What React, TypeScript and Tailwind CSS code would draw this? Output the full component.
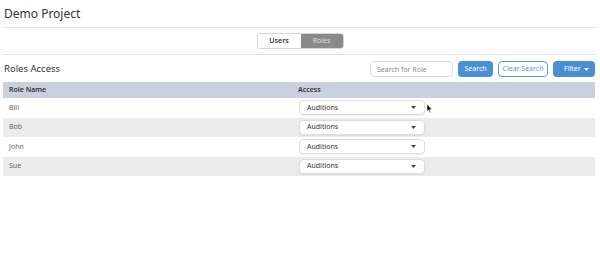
import { useState } from "react";

const rows = ["Bill", "Bob", "John", "Sue"];

function Caret() {
  return (
    <svg width="5" height="3" viewBox="0 0 5 3" className="shrink-0">
      <path d="M0 0h5L2.5 3z" fill="currentColor" />
    </svg>
  );
}

function AccessSelect({ cursor }: { cursor?: boolean }) {
  return (
    <div className="relative">
      <div className="flex h-[15px] w-[126px] items-center justify-between rounded-sm border border-[#dcdcdc] bg-white pl-[7px] pr-[8px] text-[7px] text-[#333] shadow-[0_1px_1px_rgba(0,0,0,0.06)]">
        <span>Auditions</span>
        <span className="text-[#444]">
          <Caret />
        </span>
      </div>
      {cursor && (
        <svg
          className="absolute left-[128px] top-[4px]"
          width="6"
          height="9"
          viewBox="0 0 6 9"
        >
          <path d="M0 0v7.5l1.7-1.6 1.2 2.8 1-.4-1.2-2.7H5z" fill="#111" stroke="#fff" strokeWidth="0.5" />
        </svg>
      )}
    </div>
  );
}

export default function App() {
  const [tab, setTab] = useState("roles");

  return (
    <div className="h-[267px] w-[600px] bg-white font-['Noto_Sans',sans-serif] text-[#333]">
      <div className="px-[3px]">
        <h1 className="pl-[1px] pt-[5px] text-[12px] leading-[18px] text-[#333]">Demo Project</h1>
        <div className="mt-[4px] border-t border-[#e2e2e2]" />
        <div className="flex justify-center py-[5px]">
          <div className="flex h-[16px] overflow-hidden rounded-[3px] border border-[#d6d6d6] text-[7px]">
            <button
              onClick={() => setTab("users")}
              className={`w-[43px] font-semibold ${tab === "users" ? "bg-[#8a8a8a] text-[#ddd]" : "bg-white text-[#333]"}`}
            >
              Users
            </button>
            <button
              onClick={() => setTab("roles")}
              className={`w-[42px] ${tab === "roles" ? "bg-[#8a8a8a] text-[#ddd]" : "bg-white text-[#333]"}`}
            >
              Roles
            </button>
          </div>
        </div>
        <div className="border-t border-[#e2e2e2]" />

        <div className="flex items-center justify-between pt-[6px] pb-[5px]">
          <h2 className="pl-[1px] text-[9.5px] text-[#333]">Roles Access</h2>
          <div className="flex items-center gap-[5px] pr-[2px] text-[7px]">
            <input
              placeholder="Search for Role"
              className="h-[16px] w-[83px] rounded-sm border border-[#d9d9d9] px-[6px] text-[7px] outline-none placeholder:text-[#888]"
            />
            <button className="h-[16px] w-[35px] rounded-sm bg-[#4a8fd4] text-white">Search</button>
            <button className="h-[16px] w-[50px] rounded-sm border border-[#5a9ad8] bg-white text-[#5a9ad8]">
              Clear Search
            </button>
            <button className="flex h-[16px] w-[42px] items-center justify-between rounded-sm bg-[#4a8fd4] pl-[11px] pr-[6px] text-white">
              <span>Filter</span>
              <Caret />
            </button>
          </div>
        </div>

        <div className="mr-[2px] text-[7px]">
          <div className="flex h-[16px] items-center bg-[#c9d1de] font-semibold text-[#333]">
            <div className="w-[295px] pl-[6px]">Role Name</div>
            <div>Access</div>
          </div>
          {rows.map((name, i) => (
            <div
              key={name}
              className={`flex h-[19.5px] items-center ${i % 2 === 1 ? "bg-[#ebebeb]" : "bg-white"}`}
            >
              <div className="w-[296px] pl-[6px] text-[#666]">{name}</div>
              <AccessSelect cursor={i === 0} />
            </div>
          ))}
        </div>
      </div>
    </div>
  );
}
